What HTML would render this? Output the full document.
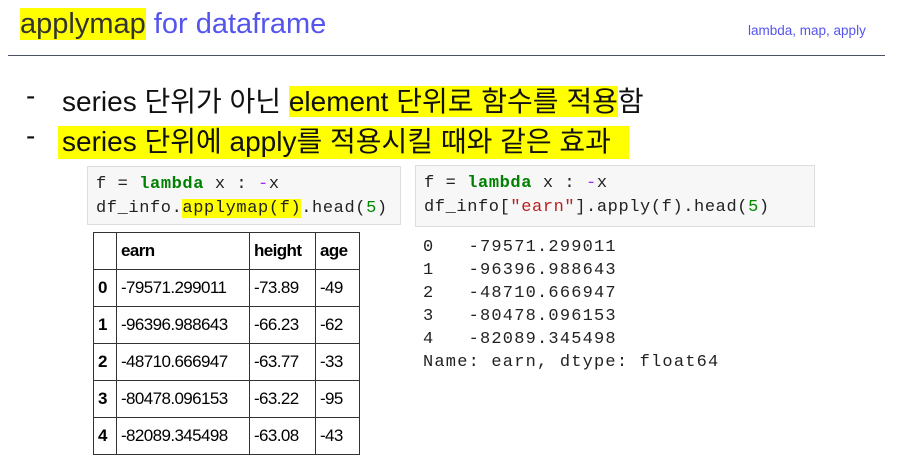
<!DOCTYPE html>
<html><head><meta charset="utf-8"><style>
body{margin:0;width:897px;height:471px;background:#fff;position:relative;overflow:hidden;font-family:"Liberation Sans","Noto Sans CJK KR",sans-serif}
.a{position:absolute;white-space:nowrap}
.hl{background:#ffff00}
.mono{font-family:"Liberation Mono",monospace}
.code{position:absolute;background:#f7f7f7;border:1px solid #ddd;font-family:"Liberation Mono",monospace;font-size:17px;letter-spacing:0.6px;line-height:24px;padding:6px 8px;box-sizing:border-box;color:#222}
.g{color:#008000;font-weight:bold}.p{color:#aa22ff}.r{color:#ba2121}.n{color:#080}
table{position:absolute;left:93px;top:232px;border-collapse:collapse;font-family:"Liberation Sans",sans-serif;font-size:17px;letter-spacing:-0.6px}
td,th{border:1px solid #333;padding:0 4px;height:36px;text-align:left}
th{font-weight:bold}
</style></head><body>
<div class="a" style="left:20px;top:8px;font-size:29px;color:#5555ee"><span class="hl" style="color:#333">applymap</span> for dataframe</div>
<div class="a" style="left:748px;top:23px;font-size:13.5px;color:#5555ee">lambda, map, apply</div>
<div class="a" style="left:8px;top:55px;width:877px;height:1px;background:#4a5160"></div>
<div class="a" style="left:26px;top:80px;font-size:28px;color:#111">-</div>
<div class="a" style="left:62px;top:80px;font-size:28px;color:#111">series 단위가 아닌 <span class="hl">element 단위로 함수를 적용</span>함</div>
<div class="a" style="left:26px;top:120px;font-size:28px;color:#111">-</div>
<div class="a" style="left:58px;top:120px;font-size:28px;color:#111"><span class="hl" style="padding:0 18px 2px 4px">series 단위에 apply를 적용시킬 때와 같은 효과</span></div>
<div class="code" style="left:87px;top:166px;width:314px;height:59px">f = <span class="g">lambda</span> x : <span class="p">-</span>x<br>df_info.<span class="hl">applymap(f)</span>.head(<span class="n">5</span>)</div>
<div class="code" style="left:415px;top:165px;width:400px;height:62px">f = <span class="g">lambda</span> x : <span class="p">-</span>x<br>df_info[<span class="r">"earn"</span>].apply(f).head(<span class="n">5</span>)</div>
<table>
<tr><th style="width:14px"></th><th style="width:124px">earn</th><th style="width:57px">height</th><th style="width:35px">age</th></tr>
<tr><th>0</th><td>-79571.299011</td><td>-73.89</td><td>-49</td></tr>
<tr><th>1</th><td>-96396.988643</td><td>-66.23</td><td>-62</td></tr>
<tr><th>2</th><td>-48710.666947</td><td>-63.77</td><td>-33</td></tr>
<tr><th>3</th><td>-80478.096153</td><td>-63.22</td><td>-95</td></tr>
<tr><th>4</th><td>-82089.345498</td><td>-63.08</td><td>-43</td></tr>
</table>
<div class="a mono" style="left:423px;top:236px;font-size:17px;letter-spacing:1.2px;line-height:23px;color:#222">0&nbsp;&nbsp;&nbsp;-79571.299011<br>1&nbsp;&nbsp;&nbsp;-96396.988643<br>2&nbsp;&nbsp;&nbsp;-48710.666947<br>3&nbsp;&nbsp;&nbsp;-80478.096153<br>4&nbsp;&nbsp;&nbsp;-82089.345498<br>Name: earn, dtype: float64</div>
</body></html>
